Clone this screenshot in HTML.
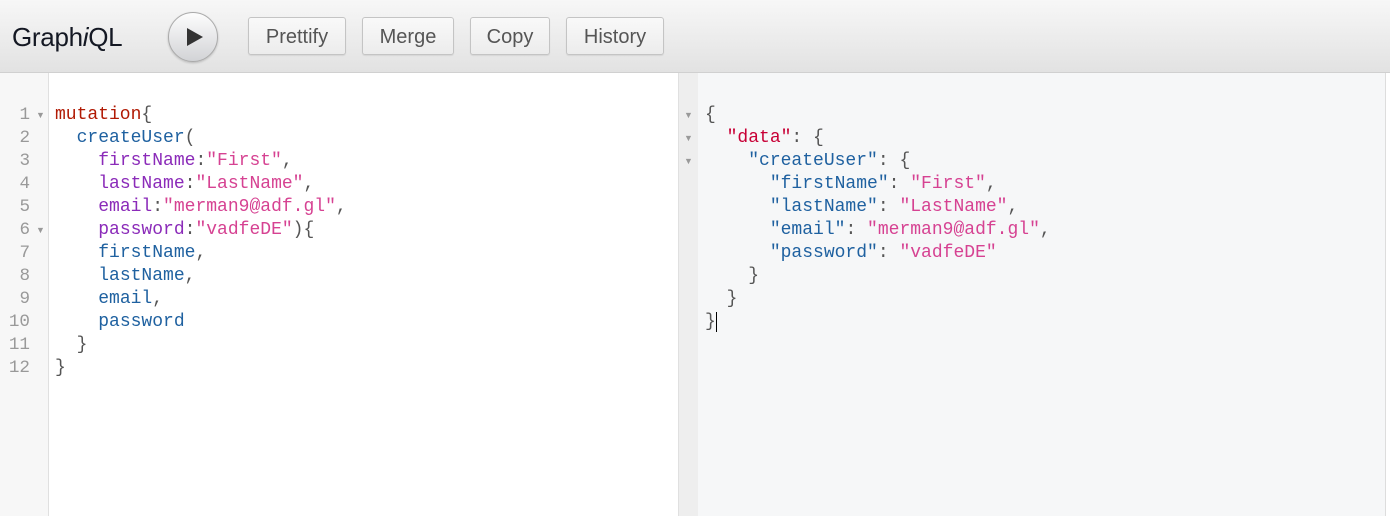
<!DOCTYPE html>
<html><head><style>
body{margin:0;width:1390px;height:516px;overflow:hidden;font-family:"Liberation Sans",sans-serif;background:#fff;position:relative}
.tb{position:absolute;left:0;top:0;width:1390px;height:72px;background:linear-gradient(#f7f7f7,#e2e2e2);border-bottom:1px solid #d0d0d0}
.title{position:absolute;left:12px;top:22px;font-size:26px;color:#141823;letter-spacing:-0.3px}
.play{position:absolute;left:168px;top:12px;width:48px;height:48px;border-radius:50%;border:1px solid #aaa;background:linear-gradient(#fdfdfd,#d2d3d6);box-shadow:0 1px 2px rgba(0,0,0,.2)}
.play svg{position:absolute;left:17px;top:14px}
.btn{position:absolute;top:17px;height:38px;border:1px solid #c4c4c4;border-radius:3px;background:linear-gradient(#f9f9f9,#ececec);box-shadow:0 1px 1px rgba(0,0,0,.08);font-size:20px;color:#555;text-align:center;line-height:38px;box-sizing:border-box}
.gut{position:absolute;left:0;top:73px;width:48px;height:443px;background:#f7f7f7;border-right:1px solid #e0e0e0}
.div{position:absolute;left:678px;top:73px;width:19px;height:443px;background:#eeeeee;border-left:1px solid #e0e0e0;border-right:1px solid #e0e0e0}
.res{position:absolute;left:698px;top:73px;width:687px;height:443px;background:#f6f7f8}
.sb{position:absolute;left:1385px;top:73px;width:5px;height:443px;background:#fff;border-left:1px solid #ddd}
.code{position:absolute;font-family:"Liberation Mono",monospace;font-size:18px;line-height:23px;white-space:pre;color:#555}
.ln{position:absolute;left:0;width:30px;text-align:right;font-family:"Liberation Mono",monospace;font-size:17.6px;line-height:23px;color:#999;white-space:pre}
.ar{position:absolute;font-size:9px;color:#999}
.k{color:#B11A04}.d{color:#1F61A0}.p{color:#8B2BB9}.s{color:#D64292}.r{color:#c80036}
</style></head><body>
<div class="tb">
<div class="title">Graph<i>i</i>QL</div>
<div class="play"><svg width="18" height="20"><path d="M1 1 L17 10 L1 19 Z" fill="#333"/></svg></div>
<div class="btn" style="left:248px;width:98px">Prettify</div>
<div class="btn" style="left:362px;width:92px">Merge</div>
<div class="btn" style="left:470px;width:80px">Copy</div>
<div class="btn" style="left:566px;width:98px">History</div>
</div>
<div class="gut"></div>
<div class="ln" style="top:104px">1
2
3
4
5
6
7
8
9
10
11
12</div>
<div class="ar" style="left:36px;top:110px">▼</div>
<div class="ar" style="left:36px;top:225px">▼</div>
<div class="code" style="left:55px;top:104px"><span class="k">mutation</span>{
  <span class="d">createUser</span>(
    <span class="p">firstName</span>:<span class="s">"First"</span>,
    <span class="p">lastName</span>:<span class="s">"LastName"</span>,
    <span class="p">email</span>:<span class="s">"merman9@adf.gl"</span>,
    <span class="p">password</span>:<span class="s">"vadfeDE"</span>){
    <span class="d">firstName</span>,
    <span class="d">lastName</span>,
    <span class="d">email</span>,
    <span class="d">password</span>
  }
}</div>
<div class="div"></div>
<div class="res"></div>
<div class="sb"></div>
<div class="ar" style="left:684px;top:110px">▼</div>
<div class="ar" style="left:684px;top:133px">▼</div>
<div class="ar" style="left:684px;top:156px">▼</div>
<div class="code" style="left:705px;top:104px">{
  <span class="r">"data"</span>: {
    <span class="d">"createUser"</span>: {
      <span class="d">"firstName"</span>: <span class="s">"First"</span>,
      <span class="d">"lastName"</span>: <span class="s">"LastName"</span>,
      <span class="d">"email"</span>: <span class="s">"merman9@adf.gl"</span>,
      <span class="d">"password"</span>: <span class="s">"vadfeDE"</span>
    }
  }
}<span style="border-left:1px solid #000"></span></div>
</body></html>
